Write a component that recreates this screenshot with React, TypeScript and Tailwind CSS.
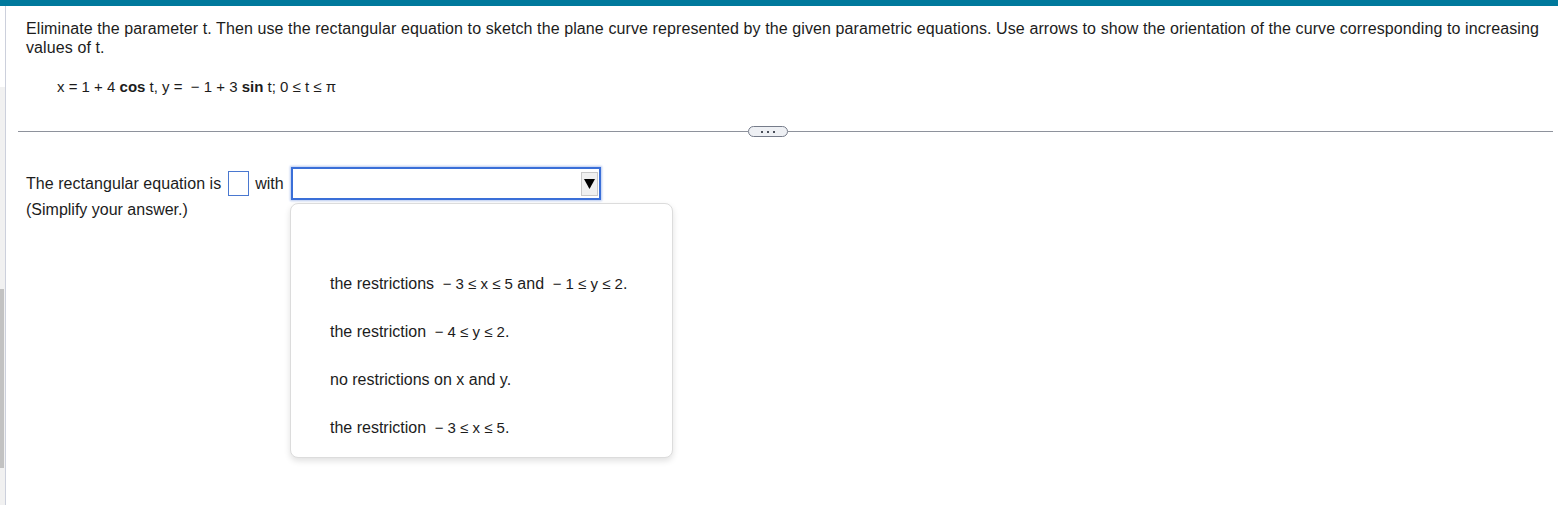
import React from 'react';

const M = ({ children }: { children: React.ReactNode }) => <span className="text-[15px]">{children}</span>;

const options = [
  <>the restrictions <M>&nbsp;− 3 ≤ x ≤ 5</M> and <M>&nbsp;− 1 ≤ y ≤ 2</M>.</>,
  <>the restriction <M>&nbsp;− 4 ≤ y ≤ 2</M>.</>,
  <>no restrictions on x and y.</>,
  <>the restriction <M>&nbsp;− 3 ≤ x ≤ 5</M>.</>,
];

export default function App() {
  return (
    <div className="w-[1558px] h-[505px] overflow-hidden bg-white text-[16px] text-[#1c1c1c] font-['Liberation_Sans',Arial,sans-serif]">
      {/* top bar */}
      <div className="h-[6px] bg-[#00799c]" />
      <div className="flex h-[499px]">
        {/* left gutter */}
        <div className="w-[6px] flex flex-col border-r border-[#ccd0dc]">
          <div className="h-[81px] bg-white" />
          <div className="flex-1 bg-[#f1f1f1] flex flex-col">
            <div className="h-[202px]" />
            <div className="h-[179px] w-[4px] bg-[#c2c2c2]" />
          </div>
        </div>

        {/* main */}
        <div className="flex-1 relative">
          <div className="pl-[20px] pr-[4px] pt-[13px]">
            <p className="leading-[19px] tracking-[0.1px]">
              Eliminate the parameter t. Then use the rectangular equation to sketch the plane curve represented by the given parametric equations. Use arrows to show the orientation of the curve corresponding to increasing values of t.
            </p>
            <p className="mt-[20px] pl-[31px] leading-[19px] text-[15px]">
              x = 1 + 4 <b>cos</b> t, y = &nbsp;− 1 + 3 <b>sin</b> t; 0 ≤ t ≤ π
            </p>
          </div>

          {/* separator */}
          <div className="mt-[30px] ml-[12px] mr-[5px] flex items-center h-[11px]">
            <div className="flex-1 h-px bg-[#8e929c]" />
            <div className="w-[40px] h-[11px] rounded-full border border-[#767c8a] bg-[#eef0f4] flex items-center justify-center gap-[4px]">
              <span className="w-[2px] h-[2px] bg-[#4a4f5a]" />
              <span className="w-[2px] h-[2px] bg-[#4a4f5a]" />
              <span className="w-[2px] h-[2px] bg-[#4a4f5a]" />
            </div>
            <div className="w-[765px] h-px bg-[#8e929c]" />
          </div>

          {/* answer row */}
          <div className="pl-[20px] mt-[30px]">
            <div className="flex items-center h-[33px]">
              <span className="tracking-[0.05px]">The rectangular equation is</span>
              <span className="ml-[7px] w-[21px] h-[25px] border border-[#4a78d0]" />
              <span className="ml-[6px]">with</span>
              <div className="ml-[7px] w-[310px] h-[33px] border-2 border-[#3a6fd8] shadow-[0_0_2px_1px_#b8c9f0] flex items-center justify-end pr-[1px]">
                <div className="w-[17px] h-[24px] bg-[#f0f0f0] border border-[#c8c8c8] flex items-center justify-center">
                  <svg width="11" height="11" viewBox="0 0 11 11">
                    <polygon points="0,1 11,1 5.5,11" fill="#000" />
                  </svg>
                </div>
              </div>
            </div>
            <p className="leading-[19px]">(Simplify your answer.)</p>
          </div>

          {/* dropdown menu */}
          <div className="absolute left-[284px] top-[197px] w-[383px] h-[255px] bg-white border border-[#dcdcdc] rounded-[8px] shadow-[0_3px_6px_rgba(0,0,0,0.12)] pt-[70px] pl-[39px]">
            {options.map((o, i) => (
              <div key={i} className="h-[48px] leading-[19px]">
                {o}
              </div>
            ))}
          </div>
        </div>
      </div>
    </div>
  );
}
